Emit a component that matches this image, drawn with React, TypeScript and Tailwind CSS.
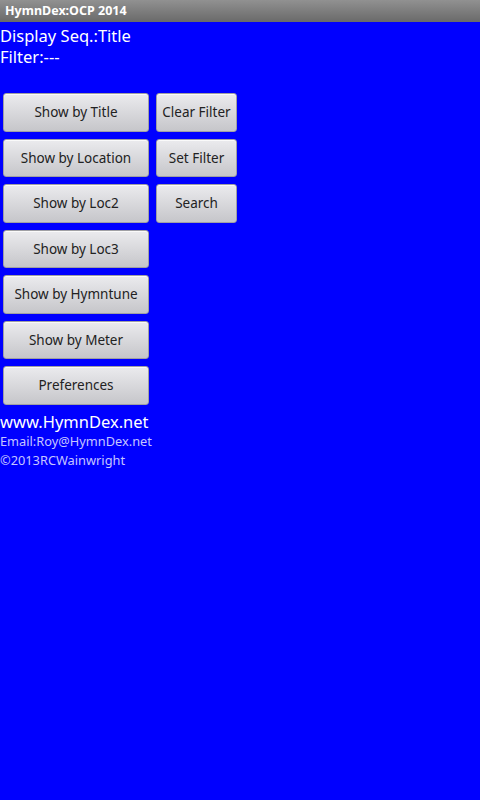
const leftButtons = [
  'Show by Title',
  'Show by Location',
  'Show by Loc2',
  'Show by Loc3',
  'Show by Hymntune',
  'Show by Meter',
  'Preferences',
];

const rightButtons = ['Clear Filter', 'Set Filter', 'Search'];

function AndroidButton({ label, width }: { label: string; width: string }) {
  return (
    <button
      className={`${width} h-[38.5px] rounded-[3px] border border-[#a0a0a4] bg-gradient-to-b from-[#ebebee] to-[#c6c6ca] text-[13.5px] text-[#222] shadow-[inset_0_1px_0_#fafafa]`}
    >
      {label}
    </button>
  );
}

export default function App() {
  return (
    <div className="w-[480px] h-[800px] bg-[#0000ff] font-['Noto_Sans',sans-serif] flex flex-col">
      {/* title bar */}
      <div className="h-[22px] bg-gradient-to-b from-[#919191] to-[#6a6a6a] flex items-center pl-[5px]">
        <span className="text-white font-bold text-[12.5px] leading-none">HymnDex:OCP 2014</span>
      </div>

      <div className="text-white text-[16.5px] leading-[21px] mt-[3px]">
        <div>Display Seq.:Title</div>
        <div>Filter:---</div>
      </div>

      <div className="flex gap-[7px] pl-[3px] mt-[26px]">
        <div className="flex flex-col gap-[7px]">
          {leftButtons.map(b => (
            <AndroidButton key={b} label={b} width="w-[146px]" />
          ))}
        </div>
        <div className="flex flex-col gap-[7px]">
          {rightButtons.map(b => (
            <AndroidButton key={b} label={b} width="w-[81px]" />
          ))}
        </div>
      </div>

      <div className="mt-[6px]">
        <div className="text-white text-[16.5px] leading-[21px]">www.HymnDex.net</div>
        <div className="text-[#c6c6ff] text-[12.8px] leading-[19px]">Email:Roy@HymnDex.net</div>
        <div className="text-[#c6c6ff] text-[12.8px] leading-[19px]">©2013RCWainwright</div>
      </div>
    </div>
  );
}
